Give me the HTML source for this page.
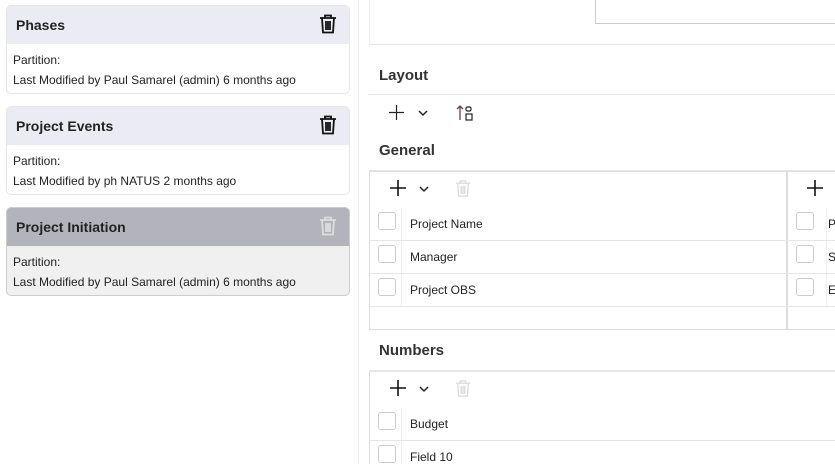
<!DOCTYPE html>
<html><head><style>
*{box-sizing:border-box;margin:0;padding:0}
body{width:835px;height:464px;overflow:hidden;background:#fff;font-family:"Segoe UI","Liberation Sans",sans-serif;color:#222;position:relative}
.a{position:absolute}
.card{position:absolute;left:6px;width:344px;height:89px;border:1px solid #e6e6ea;border-radius:5px;overflow:hidden;background:#fff}
.card .h{height:38px;background:#ebebf3;font-weight:bold;font-size:14px;padding:11px 0 0 9px;position:relative;color:#222}
.card .b{font-size:12px;padding:6px 0 0 6px;line-height:20px}
.card svg{position:absolute;right:12px;top:8px}
.cb{position:absolute;width:18px;height:18px;border:1px solid #ccc;border-radius:3px;background:#fff}
.t{position:absolute;font-size:12px}
.hl{position:absolute;height:1px;background:#e6e6e6}
.sec{position:absolute;font-size:15px;font-weight:bold;color:#333}
</style></head><body>
<div class="card" style="top:5px"><div class="h">Phases<svg width="18" height="20" viewBox="0 0 18 20"><path d="M1 4h16M6 4V1.5h6V4M3 4l1 14.5h10L15 4M7 7v9M9 7v9M11 7v9" fill="none" stroke="#111" stroke-width="1.8"/></svg></div><div class="b">Partition:<br>Last Modified by Paul Samarel (admin) 6 months ago</div></div>
<div class="card" style="top:106px"><div class="h">Project Events<svg width="18" height="20" viewBox="0 0 18 20"><path d="M1 4h16M6 4V1.5h6V4M3 4l1 14.5h10L15 4M7 7v9M9 7v9M11 7v9" fill="none" stroke="#111" stroke-width="1.8"/></svg></div><div class="b">Partition:<br>Last Modified by ph NATUS 2 months ago</div></div>
<div class="card" style="top:207px;background:#f0f0f0;border-color:#ccc"><div class="h" style="background:#b3b3bb">Project Initiation<svg width="18" height="20" viewBox="0 0 18 20"><path d="M1 4h16M6 4V1.5h6V4M3 4l1 14.5h10L15 4M7 7v9M9 7v9M11 7v9" fill="none" stroke="#ddd" stroke-width="1.8"/></svg></div><div class="b">Partition:<br>Last Modified by Paul Samarel (admin) 6 months ago</div></div>
<div class="a" style="left:358px;top:0;width:1px;height:464px;background:#eee"></div>
<div class="a" style="left:369px;top:0;width:466px;height:45px;border-left:1px solid #eee;border-bottom:1px solid #e6e6e6"></div>
<div class="a" style="left:595px;top:0;width:240px;height:24px;border-left:1px solid #ccc;border-bottom:1px solid #ccc"></div>
<div class="sec" style="left:379px;top:67px">Layout</div>
<div class="hl" style="left:369px;top:94px;width:466px"></div>
<svg class="a" style="left:389px;top:105px" width="15" height="15"><path d="M7.5 0v15M0 7.5h15" stroke="#222" stroke-width="1.2"/></svg>
<svg class="a" style="left:418px;top:110px" width="10" height="7"><path d="M1 1l4 4 4-4" fill="none" stroke="#222" stroke-width="1.5"/></svg>
<svg class="a" style="left:456px;top:104px" width="20" height="18"><path d="M4 16V2M1 5l3-3 3 3" fill="none" stroke="#803050" stroke-width="1.3"/><rect x="10" y="3" width="5" height="4" rx="1.5" fill="none" stroke="#222" stroke-width="1.2"/><rect x="10" y="10" width="6" height="6" fill="none" stroke="#222" stroke-width="1.2"/></svg>
<div class="sec" style="left:379px;top:142px">General</div>
<div class="hl" style="left:369px;top:170px;width:466px"></div>
<div class="a" style="left:369px;top:171px;width:466px;height:159px;border:1px solid #ddd;border-right:none"></div>
<div class="a" style="left:786px;top:171px;width:2px;height:159px;background:#ddd"></div>
<svg class="a" style="left:390px;top:180px" width="16" height="16"><path d="M8 0v16M0 8h16" stroke="#111" stroke-width="1.6"/></svg>
<svg class="a" style="left:419px;top:186px" width="10" height="7"><path d="M1 1l4 4 4-4" fill="none" stroke="#222" stroke-width="1.5"/></svg>
<svg class="a" style="left:455px;top:179px" width="16" height="19" viewBox="0 0 18 20"><path d="M1 4h16M6 4V1.5h6V4M3 4l1 14.5h10L15 4M7 7v9M9 7v9M11 7v9" fill="none" stroke="#ddd" stroke-width="1.6"/></svg>
<svg class="a" style="left:807px;top:180px" width="16" height="16"><path d="M8 0v16M0 8h16" stroke="#111" stroke-width="1.6"/></svg>
<div class="a" style="left:401px;top:208px;width:1px;height:98px;background:#eee"></div>
<div class="a" style="left:826px;top:208px;width:1px;height:98px;background:#eee"></div>
<div class="cb" style="left:378px;top:212px"></div><div class="t" style="left:410px;top:217px">Project Name</div>
<div class="cb" style="left:796px;top:212px"></div><div class="t" style="left:828px;top:217px">P</div>
<div class="hl" style="left:370px;top:240px;width:465px"></div>
<div class="cb" style="left:378px;top:245px"></div><div class="t" style="left:410px;top:250px">Manager</div>
<div class="cb" style="left:796px;top:245px"></div><div class="t" style="left:828px;top:250px">S</div>
<div class="hl" style="left:370px;top:273px;width:465px"></div>
<div class="cb" style="left:378px;top:278px"></div><div class="t" style="left:410px;top:283px">Project OBS</div>
<div class="cb" style="left:796px;top:278px"></div><div class="t" style="left:828px;top:283px">E</div>
<div class="hl" style="left:370px;top:306px;width:465px"></div>
<div class="sec" style="left:379px;top:342px">Numbers</div>
<div class="hl" style="left:369px;top:370px;width:466px;height:2px"></div>
<div class="a" style="left:369px;top:372px;width:1px;height:92px;background:#ddd"></div>
<svg class="a" style="left:390px;top:380px" width="16" height="16"><path d="M8 0v16M0 8h16" stroke="#111" stroke-width="1.6"/></svg>
<svg class="a" style="left:419px;top:386px" width="10" height="7"><path d="M1 1l4 4 4-4" fill="none" stroke="#222" stroke-width="1.5"/></svg>
<svg class="a" style="left:455px;top:379px" width="16" height="19" viewBox="0 0 18 20"><path d="M1 4h16M6 4V1.5h6V4M3 4l1 14.5h10L15 4M7 7v9M9 7v9M11 7v9" fill="none" stroke="#ddd" stroke-width="1.6"/></svg>
<div class="a" style="left:401px;top:408px;width:1px;height:56px;background:#eee"></div>
<div class="cb" style="left:378px;top:412px"></div><div class="t" style="left:410px;top:417px">Budget</div>
<div class="hl" style="left:370px;top:440px;width:465px"></div>
<div class="cb" style="left:378px;top:445px"></div><div class="t" style="left:410px;top:450px">Field 10</div>
</body></html>
